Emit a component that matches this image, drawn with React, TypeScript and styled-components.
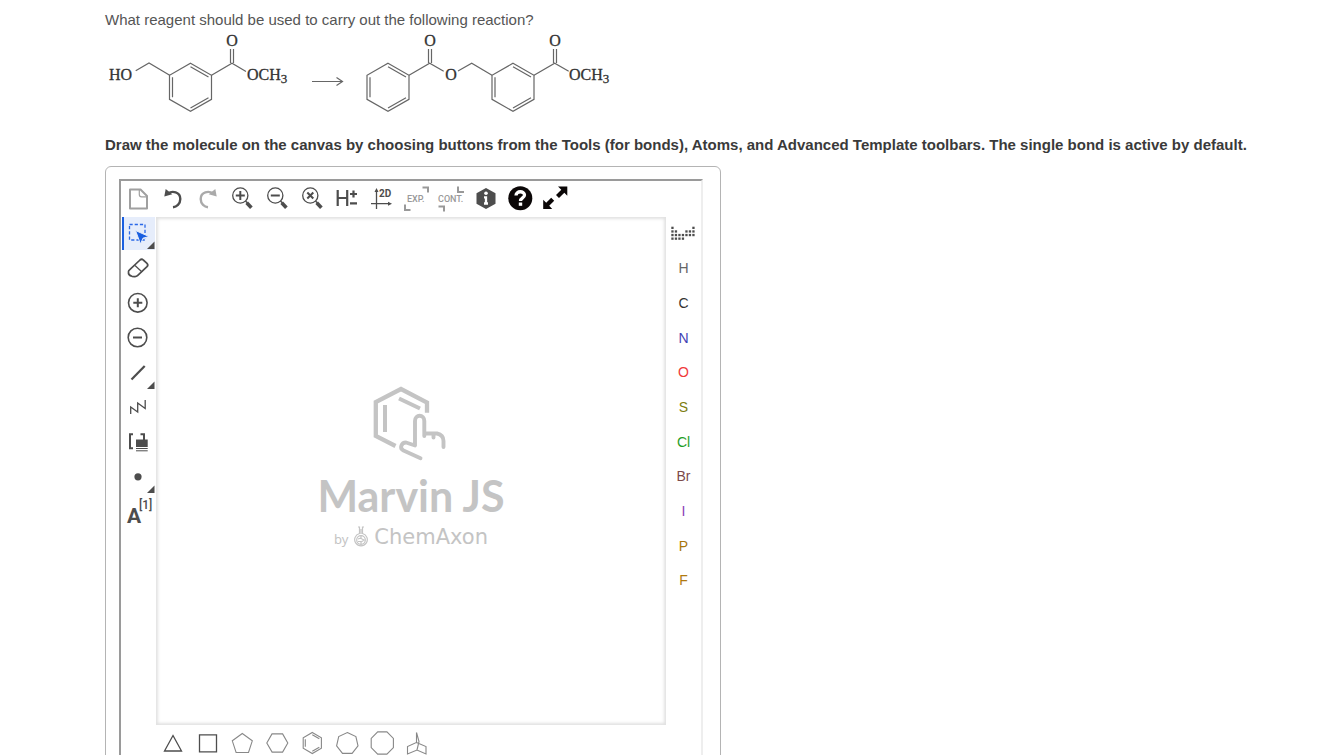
import React from 'react';
import styled, { createGlobalStyle } from 'styled-components';

const GlobalStyle = createGlobalStyle`
  * { box-sizing: border-box; }
  body {
    margin: 0;
    background: #fff;
    color: #444;
    font-family: "Liberation Sans", Arial, sans-serif;
  }
`;

const Page = styled.main`
  height: 100vh;
  overflow: hidden;
  padding: 10px 60px 0 105px;
`;

const Question = styled.p`
  margin: 0;
  font-size: 15px;
  line-height: 20px;
  color: #555;
`;

const Scheme = styled.svg`
  display: block;
  width: 510px;
  height: 84px;
  font-family: "Liberation Serif", serif;
  font-size: 16px;
`;

const Instruction = styled.p`
  margin: 21px 0 11px;
  font-size: 15px;
  line-height: 20px;
  font-weight: 700;
  color: #3a3a3a;
  white-space: nowrap;
`;

const Frame = styled.section`
  width: 100%;
  max-width: 616px;
  padding: 12px 17px 14px 13px;
  border: 1px solid #b4b4b4;
  border-radius: 6px;
`;

const Editor = styled.div`
  border: 2px solid;
  border-color: #9a9a9a #eee #eee #9a9a9a;
`;

const TopBar = styled.div`
  display: flex;
  height: 36px;
`;

const Workspace = styled.div`
  display: grid;
  grid-template-columns: 35px 1fr 35px;
  height: 508px;
`;

const SideBar = styled.div`
  display: flex;
  flex-direction: column;
  gap: 2px;
  padding-left: 1px;
`;

const AtomBar = styled.div`
  display: flex;
  flex-direction: column;
  justify-content: space-between;
  height: 380px;
`;

const TemplateBar = styled.div`
  display: flex;
  height: 38px;
  padding-left: 34px;
`;

const ToolButton = styled.button<{ $side?: boolean; $active?: boolean }>`
  display: block;
  flex: none;
  width: ${(p) => (p.$side ? 33 : 35)}px;
  height: ${(p) => (p.$side ? 33 : 36)}px;
  padding: 0;
  border: 0;
  background: ${(p) => (p.$active ? '#e6edfb' : 'transparent')};
  box-shadow: ${(p) => (p.$active ? 'inset 2px 0 #1a5fe0' : 'none')};
  font-family: inherit;
  svg { display: block; }
`;

const AtomButton = styled.button<{ $color: string }>`
  flex: none;
  height: 33px;
  padding: 0;
  border: 0;
  background: transparent;
  font-family: inherit;
  font-size: 14px;
  line-height: 32px;
  color: ${(p) => p.$color};
  svg { display: block; }
`;

const Canvas = styled.div`
  display: flex;
  flex-direction: column;
  align-items: center;
  padding-top: 169px;
  box-shadow: inset 0 0 3px 2px #e2e2e2;
  color: #c4c4c4;
`;

const Brand = styled.div`
  margin-top: 3px;
  font-family: Lato, sans-serif;
  font-size: 43px;
  font-weight: 700;
  line-height: 54px;
`;

const Maker = styled.div`
  display: flex;
  align-items: center;
  gap: 6px;
  margin-top: 2px;
  font-family: "DejaVu Sans", sans-serif;
  font-size: 21px;
  line-height: 24px;
`;

const By = styled.span`
  padding-top: 4px;
  font-family: "Noto Sans", sans-serif;
  font-size: 13px;
  line-height: 20px;
`;

const INK = '#4d4d4d';
const LABEL_FONT = 'Roboto, "Liberation Sans", sans-serif';

const ringPath = (x: number) =>
  `M${x} 29.3l21 12v24l-21 12l-21-12v-24z` +
  `M${x} 32.7l18 10.3M${x} 74l18-10.3M${x - 18} 43.3v20`;

function Reaction() {
  return (
    <Scheme viewBox="0 -4 510 84" role="img" aria-label="Reaction scheme">
      <g fill="none" stroke="#666" strokeWidth="1.200">
        <path d={ringPath(85.5)} />
        <path d={ringPath(283)} />
        <path d={ringPath(408)} />
        <path d="M30.7 36.7L44 29l20.7 12.3M106.5 41.3L127 29.3l14 8.2M125.5 29V15M128.5 29V15" />
        <path d="M207 47.5h30M231.500 43.500l6 4l-6 4" />
        <path d="M304 41.300L324.700 29.300l14 8M323.500 29V15M326.500 29V15M353 37L366.700 29.300L387 41.300" />
        <path d="M429 41.300L449.700 29.300l14 8M448.500 29V15M451.500 29V15" />
      </g>
      <g fill="#333" stroke="#333" strokeWidth="0.300">
        <text x="4" y="46">HO</text>
        <text x="127" y="12" textAnchor="middle">O</text>
        <text x="142" y="46">OCH<tspan dy="3" fontSize="13">3</tspan></text>
        <text x="325" y="12" textAnchor="middle">O</text>
        <text x="346" y="46" textAnchor="middle">O</text>
        <text x="450" y="12" textAnchor="middle">O</text>
        <text x="464" y="46">OCH<tspan dy="3" fontSize="13">3</tspan></text>
      </g>
    </Scheme>
  );
}

const Lens = ({ children }: { children: React.ReactNode }) => (
  <g fill="none" stroke={INK}>
    <circle cx="14.300" cy="14.500" r="7.600" strokeWidth="1.300" />
    <path d="M19.500 20l2 2" strokeWidth="1.500" />
    <path d="M20.700 21.800l4.700 5" strokeWidth="3.600" />
    <g strokeWidth="2">{children}</g>
  </g>
);

const Bowed = () => (
  <g>
    <path d="M9.700 8L8.300 15.500L16.300 13.200z" fill="currentColor" />
    <path d="M12 12.500C16 9.500 24.300 10.500 24.300 18C24.300 23 20.500 25.800 17 26.200" fill="none" stroke="currentColor" strokeWidth="2.400" />
  </g>
);

const topTools: { name: string; art: React.ReactNode }[] = [
  {
    name: 'New',
    art: (
      <g fill="none" stroke="#a0a0a0" strokeWidth="2" strokeLinejoin="round">
        <path d="M9 8.500h10.500l6.500 6.500v12.500H9z" />
        <path d="M18.300 8.500v5q0 2.300 2.300 2.300H26" strokeWidth="1.200" />
      </g>
    ),
  },
  { name: 'Undo', art: <g color={INK}><Bowed /></g> },
  { name: 'Redo', art: <g color="#aaa" transform="translate(34 0) scale(-1 1)"><Bowed /></g> },
  { name: 'Zoom in', art: <Lens><path d="M14.300 10v9M9.800 14.500h9" /></Lens> },
  { name: 'Zoom out', art: <Lens><path d="M9.800 14.500h9" /></Lens> },
  { name: 'Zoom reset', art: <Lens><path d="M11.300 11.500l6 6M17.300 11.500l-6 6" /></Lens> },
  {
    name: 'Hydrogens',
    art: (
      <path d="M6.700 9v16M16.200 9v16M6.700 17h9.500M19 13h7M22.500 9.500v7M19 22.300h7" fill="none" stroke={INK} strokeWidth="2.200" />
    ),
  },
  {
    name: 'Clean in 2D',
    art: (
      <g fill={INK}>
        <path d="M10.500 9v19M5 22.700h19" stroke={INK} strokeWidth="1.300" />
        <path d="M10.500 7l-2 4h4zM26 22.700l-4-2v4z" />
        <text x="13" y="16" fontSize="10" fontWeight="700" fontFamily={LABEL_FONT}>2D</text>
      </g>
    ),
  },
  {
    name: 'Expand groups',
    art: (
      <g fill="#999">
        <path d="M21.500 6.500h5.500v5M4 23.500v5.500H9.500" fill="none" stroke="#999" strokeWidth="2" />
        <text x="6" y="21" fontSize="9" fontWeight="500" fontFamily={LABEL_FONT}>EXP.</text>
      </g>
    ),
  },
  {
    name: 'Contract groups',
    art: (
      <g fill="#999">
        <path d="M22 5.500v5.500H28M2.500 25.500h5.500v5" fill="none" stroke="#999" strokeWidth="2" />
        <text x="2" y="21" fontSize="9" fontWeight="500" fontFamily={LABEL_FONT}>CONT.</text>
      </g>
    ),
  },
  {
    name: 'About',
    art: (
      <g>
        <path d="M15 7l9.500 5.300v10.500L15 28l-9.500-5.200V12.300z" fill={INK} />
        <circle cx="15" cy="12.300" r="1.800" fill="#fff" />
        <path d="M13 16.300H15V22.500M13 22.500h4" fill="none" stroke="#fff" strokeWidth="2.300" />
      </g>
    ),
  },
  {
    name: 'Help',
    art: (
      <g>
        <circle cx="14.300" cy="17.300" r="12" fill="#0b0707" />
        <path d="M10 14.500C10 9.500 18.500 9.700 18.500 14C18.500 17 14.500 16.700 14.500 20" fill="none" stroke="#fff" strokeWidth="3.300" />
        <rect x="12.800" y="21.500" width="3.400" height="3.300" fill="#fff" />
      </g>
    ),
  },
  {
    name: 'Full screen',
    art: (
      <g fill="#0b0707">
        <path d="M17 5.500h9.300v9.200l-3-3l-5.300 5.300l-3-3l5.300-5.200z" />
        <path d="M2.200 18.800l3 3l5-5l3 3l-5 5l3 3.200H2.200z" />
      </g>
    ),
  },
];

const corner = <path d="M32.500 24.500v7.500h-7.500z" fill={INK} />;

const leftTools: { name: string; art: React.ReactNode }[] = [
  {
    name: 'Select',
    art: (
      <g>
        <path d="M7.500 7.500h15.500v15.500H7.500z" fill="none" stroke="#2a68e8" strokeWidth="1.300" strokeDasharray="3.200 2" />
        <path d="M13.500 13.500L27 19.500L21 21.200L18.500 27z" fill="#1a5fe0" stroke="#e6edfb" strokeWidth="1" />
        {corner}
      </g>
    ),
  },
  {
    name: 'Erase',
    art: (
      <g fill="none" stroke={INK} strokeWidth="1.700" strokeLinejoin="round">
        <path d="M18 8Q19.700 6.500 21.300 8L25 11.300Q26.600 13 25 14.700L15.500 23.700Q14.300 24.800 12.500 24.600L10 24.300Q6 23.300 6.500 19.500Q6.600 18.600 7.500 17.800z" />
        <path d="M13 13.500l7 6.500" strokeWidth="1.200" />
      </g>
    ),
  },
  {
    name: 'Increase charge',
    art: (
      <g fill="none" stroke={INK}>
        <circle cx="15.800" cy="15.800" r="9.300" strokeWidth="1.600" />
        <path d="M15.800 11.300v9M11.300 15.800h9" strokeWidth="2" />
      </g>
    ),
  },
  {
    name: 'Decrease charge',
    art: (
      <g fill="none" stroke={INK}>
        <circle cx="15.500" cy="15.500" r="9.300" strokeWidth="1.600" />
        <path d="M11 15.500h9" strokeWidth="2" />
      </g>
    ),
  },
  {
    name: 'Single bond',
    art: (
      <g>
        <path d="M9.500 22.500L22.700 9" stroke={INK} strokeWidth="2.200" />
        {corner}
      </g>
    ),
  },
  {
    name: 'Chain',
    art: <path d="M8.700 22v-7l7 5v-9l7.500 5.500V8" fill="none" stroke={INK} strokeWidth="1.300" />,
  },
  {
    name: 'Group',
    art: (
      <g fill="none" stroke={INK}>
        <path d="M11 7.300H8v14h3M18.500 7.300H22V13" strokeWidth="2" />
        <path d="M14 12.500h11.700v7.500H14z" fill={INK} stroke="none" />
        <path d="M14 21.500h11.700M14 23.800h11.700" strokeWidth="1" />
      </g>
    ),
  },
  {
    name: 'Radical',
    art: (
      <g>
        <circle cx="16" cy="14.800" r="3.600" fill={INK} />
        <path d="M32.500 23.500v7.500h-7.500z" fill={INK} />
      </g>
    ),
  },
  {
    name: 'Atom map',
    art: (
      <g fill={INK} fontWeight="700" fontFamily={LABEL_FONT}>
        <text x="5" y="26" fontSize="21">A</text>
        <text x="17" y="12" fontSize="12" fontWeight="500">[1]</text>
      </g>
    ),
  },
];

const atoms = [
  ['H', '#666'],
  ['C', '#333'],
  ['N', '#4343b5'],
  ['O', '#f03a3a'],
  ['S', '#7d7d10'],
  ['Cl', '#1f9e28'],
  ['Br', '#7d4a4a'],
  ['I', '#8b3fb8'],
  ['P', '#a9760b'],
  ['F', '#b07a10'],
];

/* First and last filled row of every column in the periodic table glyph. */
const tableColumns = [[0, 3], [1, 3], [2, 3], [2, 3], [1, 2], [1, 2], [0, 2]];

const regular = (n: number, r: number, turn: number, cy = 18) =>
  Array.from({ length: n }, (_, i) => {
    const a = ((i * 360) / n + turn) * (Math.PI / 180);
    return `${(17.3 + r * Math.cos(a)).toFixed(1)},${(cy + r * Math.sin(a)).toFixed(1)}`;
  }).join(' ');

const templates: { name: string; art: React.ReactNode }[] = [
  { name: 'Cyclopropane', art: <path d="M18 10.500l8.500 15.500H9.500z" stroke={INK} strokeWidth="1.300" /> },
  { name: 'Cyclobutane', art: <path d="M9.500 9.800h17v17h-17z" stroke={INK} strokeWidth="1.300" /> },
  { name: 'Cyclopentane', art: <polygon points={regular(5, 10.5, -90, 19)} /> },
  { name: 'Cyclohexane', art: <polygon points={regular(6, 10.5, 0)} /> },
  { name: 'Benzene', art: <g><polygon points={regular(6, 10.5, -90)} /><path d="M17.300 9.700l7 4M17.300 26.300l7-4M10.300 14.300v7.400" /></g> },
  { name: 'Cycloheptane', art: <polygon points={regular(7, 11, -90, 18.5)} /> },
  { name: 'Cyclooctane', art: <polygon points={regular(8, 12, 22.5)} /> },
  { name: 'Bicyclooctane', art: <path d="M16.500 7.500v10L7.500 21.500v7.500l9.500-4l9 4v-7.500l-9.500-4M16.500 7.500l2.500 9L17 25" /> },
];

function Watermark() {
  return (
    <>
      <svg width="76" height="80" viewBox="1 0 76 80" fill="none" stroke="#c4c4c4" strokeWidth="4.300">
        <path d="M55 26.800V16.500L29 3L3.800 16V50L23.500 60" />
        <path d="M27 12.500l21 10M13 19v27" strokeWidth="4" />
        <path d="M48.500 72.300L31.500 64.500C27 62 29.500 56.500 34 56.500L43 59.500V35C43 28 52.300 28 52.300 35V50M52.300 47.500H65Q71.500 49 71.500 55V61M61.500 48v3.500" strokeLinecap="round" strokeLinejoin="round" strokeWidth="3.900" />
      </svg>
      <Brand>Marvin JS</Brand>
      <Maker>
        <By>by</By>
        <svg width="14" height="22" viewBox="0 0 14 22" fill="none" stroke="#c4c4c4" strokeWidth="1.200">
          <path d="M4 1h1.500v6.500A6.300 6.300 0 1 0 8.500 7.500V1H10M7 3v5" />
          <circle cx="7" cy="14" r="4.300" />
          <path d="M7 9.500v3l3 1.500l-3 2v2M4 13l3-1M4 15.500h3" />
        </svg>
        <span>ChemAxon</span>
      </Maker>
    </>
  );
}

export default function App() {
  return (
    <>
      <GlobalStyle />
      <Page>
        <Question>What reagent should be used to carry out the following reaction?</Question>
        <Reaction />
        <Instruction>
          Draw the molecule on the canvas by choosing buttons from the Tools (for bonds), Atoms, and Advanced Template
          toolbars. The single bond is active by default.
        </Instruction>
        <Frame>
          <Editor>
            <TopBar role="toolbar" aria-label="General">
              {topTools.map((t) => (
                <ToolButton key={t.name} aria-label={t.name}>
                  <svg width="35" height="36" viewBox="0 0 35 36">{t.art}</svg>
                </ToolButton>
              ))}
            </TopBar>
            <Workspace>
              <SideBar role="toolbar" aria-label="Tools">
                {leftTools.map((t, i) => (
                  <ToolButton key={t.name} aria-label={t.name} $side $active={i === 0}>
                    <svg width="33" height="33" viewBox="0 0 33 33">{t.art}</svg>
                  </ToolButton>
                ))}
              </SideBar>
              <Canvas>
                <Watermark />
              </Canvas>
              <AtomBar role="toolbar" aria-label="Atoms">
                <AtomButton $color={INK} aria-label="Periodic table">
                  <svg width="35" height="33" viewBox="0 0 35 33" fill="currentColor">
                    {tableColumns.flatMap(([from, to], c) =>
                      Array.from({ length: to - from + 1 }, (_, r) => (
                        <rect key={`${c}-${r}`} x={5.3 + c * 3.5} y={9.7 + (from + r) * 3.6} width="2.300" height="2.300" />
                      )),
                    )}
                  </svg>
                </AtomButton>
                {atoms.map(([symbol, color]) => (
                  <AtomButton key={symbol} $color={color}>{symbol}</AtomButton>
                ))}
              </AtomBar>
            </Workspace>
            <TemplateBar role="toolbar" aria-label="Templates">
              {templates.map((t) => (
                <ToolButton key={t.name} aria-label={t.name}>
                  <svg width="35" height="36" viewBox="0 0 35 36" fill="none" stroke="#888" strokeWidth="1.100">{t.art}</svg>
                </ToolButton>
              ))}
            </TemplateBar>
          </Editor>
        </Frame>
      </Page>
    </>
  );
}
